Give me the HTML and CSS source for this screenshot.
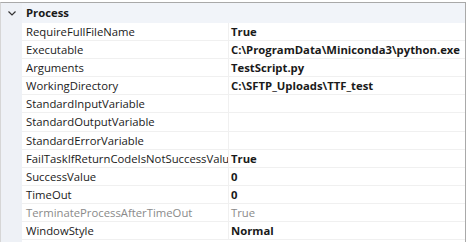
FILE: index.html
```html
<!doctype html>
<html lang="en">
<head>
	<meta charset="utf-8">
	<title>Properties</title>
	<link rel="stylesheet" href="styles.css">
</head>
<body>
<div class="grid">
	<div class="gutter"></div>
	<div class="props">
		<div class="cat">
			<svg class="chev" width="8" height="5" viewBox="0 0 8 5"><path d="M0.5 0.5 L4 4 L7.5 0.5" fill="none" stroke="#333" stroke-width="1.2"/></svg>
			<span>Process</span>
		</div>
		<div class="row"><span class="name">RequireFullFileName</span><span class="val">True</span></div>
		<div class="row"><span class="name">Executable</span><span class="val">C:\ProgramData\Miniconda3\python.exe</span></div>
		<div class="row"><span class="name">Arguments</span><span class="val">TestScript.py</span></div>
		<div class="row"><span class="name">WorkingDirectory</span><span class="val">C:\SFTP_Uploads\TTF_test</span></div>
		<div class="row"><span class="name">StandardInputVariable</span><span class="val"></span></div>
		<div class="row"><span class="name">StandardOutputVariable</span><span class="val"></span></div>
		<div class="row"><span class="name">StandardErrorVariable</span><span class="val"></span></div>
		<div class="row"><span class="name">FailTaskIfReturnCodeIsNotSuccessValue</span><span class="val">True</span></div>
		<div class="row"><span class="name">SuccessValue</span><span class="val">0</span></div>
		<div class="row"><span class="name">TimeOut</span><span class="val">0</span></div>
		<div class="row off"><span class="name">TerminateProcessAfterTimeOut</span><span class="val">True</span></div>
		<div class="row"><span class="name">WindowStyle</span><span class="val">Normal</span></div>
	</div>
</div>
</body>
</html>
```
FILE: styles.css
```css
*{ padding: 0; margin: 0; box-sizing: border-box }
body{ background: #fff; font-family: "Open Sans", "Noto Sans", sans-serif; font-size: 11.3px; color: #1a1a1a }
.grid{ display: flex; margin-top: 2px; width: 466px; height: 240px; border-top: 1px solid #a9a9a9; border-right: 1px solid #a9a9a9; border-left: 1px solid #d6d6d6 }
.gutter{ flex: none; width: 21px; background: #eef1f6 }
.props{ flex: 1; min-width: 0; display: flex; flex-direction: column }
.cat{ position: relative; flex: none; height: 20px; line-height: 19px; background: #f1f4f9; font-weight: bold; padding-left: 4px }
.chev{ position: absolute; left: -14px; top: 8px }
.row{ display: flex; flex: none; height: 18.1px; line-height: 18px; border-bottom: 1px solid #f0f0f0 }
.name{ flex: none; width: 207px; padding-left: 4px; white-space: nowrap; overflow: hidden; text-overflow: clip; border-right: 1px solid #f0f0f0 }
.val{ flex: 1; min-width: 0; padding-left: 2px; font-weight: bold; white-space: nowrap; overflow: hidden }
.off .name, .off .val{ color: #8a8a8a; font-weight: normal }
```
